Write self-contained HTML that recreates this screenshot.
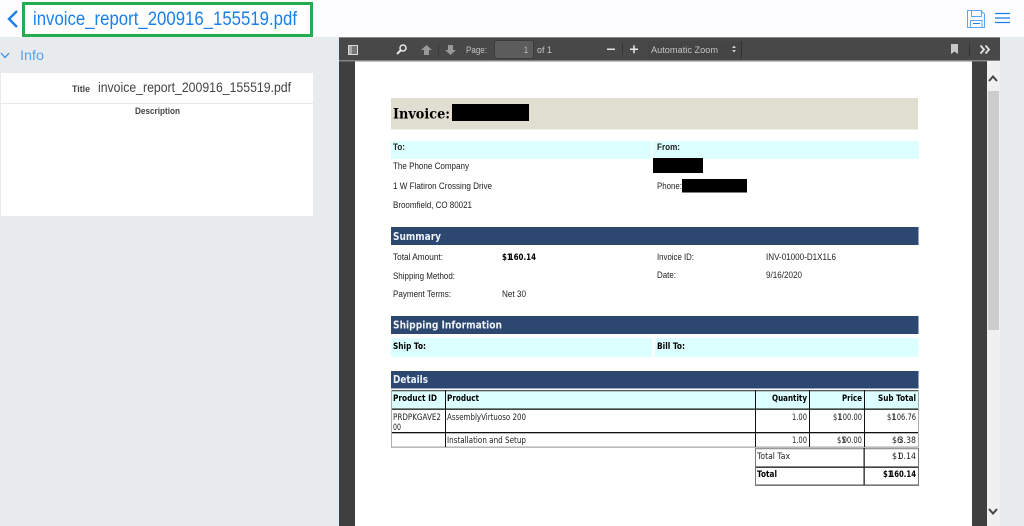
<!DOCTYPE html>
<html><head><meta charset="utf-8"><title>invoice_report_200916_155519.pdf</title>
<style>
html,body{margin:0;padding:0;background:#fff;width:1024px;height:526px;overflow:hidden}
svg{display:block}
text{font-family:"Liberation Sans",sans-serif;white-space:pre}
.s{font-size:9px;fill:#222}
.b{font-family:"DejaVu Sans",sans-serif;font-size:8.800px;font-weight:bold;fill:#000}
.h{font-family:"DejaVu Sans",sans-serif;font-size:10.800px;font-weight:bold;fill:#eef2f8}
.t{font-family:"DejaVu Sans",sans-serif;font-size:8.800px;fill:#222}
.l{font-size:9.500px;fill:#c4c4c4}
</style></head><body>
<svg width="1024" height="526" viewBox="0 0 1024 526" xmlns="http://www.w3.org/2000/svg">
<rect width="1024" height="37" fill="#fdfdff"/>
<rect y="37" width="1024" height="489" fill="#e8ebee"/>
<!-- header -->
<path d="M17 11 L9 19 L17 27" fill="none" stroke="#1a7fe8" stroke-width="2.400"/>
<rect x="23.500" y="3.500" width="288" height="32" fill="#fff" stroke="#22ae50" stroke-width="3"/>
<text x="33" y="25" font-size="19" fill="#1a7fe8" textLength="264" lengthAdjust="spacingAndGlyphs">invoice_report_200916_155519.pdf</text>
<g fill="none" stroke="#5aa6f2" stroke-width="1">
<path d="M967.500 10.500 H981 L984.500 14 V27.500 H967.500 Z"/>
<path d="M971.500 10.500 V16.500 H981.500 V10.500"/>
<path d="M970.500 27.500 V20.500 H982 V27.500"/>
<path d="M973 23.500 H980" stroke="#1a7fe8"/>
</g>
<path d="M995 13.500 H1010 M995 18 H1010 M995 22.500 H1010" stroke="#1a7fe8" stroke-width="1.300"/>
<!-- sidebar -->
<path d="M1 53 L5 57.500 L9 53" fill="none" stroke="#3a8fe8" stroke-width="1.300"/>
<text x="20" y="60" font-size="14" fill="#5aa2ee" textLength="24" lengthAdjust="spacingAndGlyphs">Info</text>
<rect x="1" y="73" width="312" height="143" fill="#fff"/>
<rect x="1" y="103" width="312" height="1" fill="#e8e8e8"/>
<text x="72" y="92" font-size="9.500" font-weight="bold" fill="#444" textLength="18" lengthAdjust="spacingAndGlyphs">Title</text>
<text x="98" y="92" font-size="14" fill="#444" textLength="193" lengthAdjust="spacingAndGlyphs">invoice_report_200916_155519.pdf</text>
<text x="135" y="114" font-size="9.500" font-weight="bold" fill="#444" textLength="45" lengthAdjust="spacingAndGlyphs">Description</text>
<!-- viewer -->
<rect x="339" y="37" width="661" height="489" fill="#3f3f3f"/>
<rect x="339" y="37" width="661" height="24" fill="#484848"/>
<rect x="339" y="37" width="661" height="1" fill="#8a8a8a"/>
<rect x="339" y="60" width="661" height="1.500" fill="#858585"/>
<rect x="355" y="61.500" width="617" height="464.500" fill="#fff"/>
<rect x="987" y="61" width="13" height="465" fill="#f0f0f0"/>
<rect x="988" y="91" width="11" height="239" fill="#cdcdcd"/>
<path d="M989 81 L993 76.500 L997 81" fill="none" stroke="#444" stroke-width="2"/>
<path d="M989 509 L993 513.500 L997 509" fill="none" stroke="#444" stroke-width="2"/>
<!-- toolbar -->
<rect x="348.500" y="45.500" width="9" height="9" fill="#777" stroke="#ddd"/>
<rect x="349" y="46" width="3" height="8" fill="#aaa"/>
<circle cx="403" cy="48" r="3" fill="none" stroke="#e8e8e8" stroke-width="1.500"/>
<path d="M401 50 L397 54" stroke="#e8e8e8" stroke-width="2"/>
<path d="M426.500 45 L432 50 H429 V55 H424 V50 H421 Z" fill="#999"/>
<rect x="438" y="44" width="1" height="11" fill="#3a3a3a"/>
<path d="M450.500 55 L456 50 H453 V45 H448 V50 H445 Z" fill="#999"/>
<text x="466" y="53" class="l" textLength="21" lengthAdjust="spacingAndGlyphs">Page:</text>
<rect x="494.500" y="40.500" width="39" height="18" rx="2" fill="#5c5c5c" stroke="#3c3c3c"/>
<text x="524" y="53" class="l" textLength="4" lengthAdjust="spacingAndGlyphs">1</text>
<text x="537" y="53" class="l" textLength="15" lengthAdjust="spacingAndGlyphs">of 1</text>
<rect x="607" y="48.500" width="8" height="1.500" fill="#e4e4e4"/>
<rect x="622" y="44" width="1" height="11" fill="#333"/>
<path d="M630 49.300 H638 M634 45.300 V53.300" stroke="#e8e8e8" stroke-width="1.500"/>
<rect x="648" y="41" width="93" height="18" rx="2" fill="#454545"/>
<text x="651" y="53" class="l" textLength="67" lengthAdjust="spacingAndGlyphs">Automatic Zoom</text>
<path d="M732 48 L734 45.500 L736 48 Z M732 50 L734 52.500 L736 50 Z" fill="#ccc"/>
<rect x="741" y="41" width="1" height="17" fill="#333"/>
<path d="M951 44 H958 V54 L954.500 51.500 L951 54 Z" fill="#c8c8c8"/>
<rect x="969" y="43" width="1" height="13" fill="#333"/>
<path d="M980.500 45.500 L984 49.500 L980.500 53.500 M985.500 45.500 L989 49.500 L985.500 53.500" fill="none" stroke="#e4e4e4" stroke-width="1.800"/>
<!-- document -->
<rect x="391" y="98" width="527" height="31.500" fill="#dfded0"/>
<text x="393" y="118.500" font-size="14" font-weight="bold" fill="#000" style="font-family:'DejaVu Serif','DejaVu Sans',serif" textLength="57" lengthAdjust="spacingAndGlyphs">Invoice:</text>
<rect x="452" y="104" width="77" height="17" fill="#000"/>
<rect x="391" y="141" width="260.500" height="18" fill="#dcffff"/>
<rect x="653" y="141" width="266" height="18" fill="#dcffff"/>
<text x="393" y="150" class="s" font-weight="bold" textLength="12" lengthAdjust="spacingAndGlyphs">To:</text>
<text x="657" y="150" class="s" font-weight="bold" textLength="23" lengthAdjust="spacingAndGlyphs">From:</text>
<rect x="653" y="158" width="50" height="15" fill="#000"/>
<text x="393" y="169" class="s" textLength="76" lengthAdjust="spacingAndGlyphs">The Phone Company</text>
<text x="393" y="189" class="s" textLength="99" lengthAdjust="spacingAndGlyphs">1 W Flatiron Crossing Drive</text>
<text x="393" y="208" class="s" textLength="79" lengthAdjust="spacingAndGlyphs">Broomfield, CO 80021</text>
<text x="657" y="189" class="s" textLength="25" lengthAdjust="spacingAndGlyphs">Phone:</text>
<rect x="682" y="179" width="65" height="13.500" fill="#000"/>
<rect x="391" y="227" width="527.500" height="18" fill="#2c4770"/>
<text x="393" y="240" class="h" textLength="48" lengthAdjust="spacingAndGlyphs">Summary</text>
<text x="393" y="260" class="s" textLength="50" lengthAdjust="spacingAndGlyphs">Total Amount:</text>
<text x="502" y="260" class="b" dx="0 0 -4 0 0 0 0 0" textLength="34" lengthAdjust="spacingAndGlyphs">$1160.14</text>
<text x="393" y="279" class="s" textLength="62" lengthAdjust="spacingAndGlyphs">Shipping Method:</text>
<text x="393" y="297" class="s" textLength="58" lengthAdjust="spacingAndGlyphs">Payment Terms:</text>
<text x="502" y="297" class="s" textLength="24" lengthAdjust="spacingAndGlyphs">Net 30</text>
<text x="657" y="260" class="s" textLength="37" lengthAdjust="spacingAndGlyphs">Invoice ID:</text>
<text x="766" y="260" class="s" textLength="70" lengthAdjust="spacingAndGlyphs">INV-01000-D1X1L6</text>
<text x="657" y="278" class="s" textLength="19" lengthAdjust="spacingAndGlyphs">Date:</text>
<text x="766" y="278" class="s" textLength="36" lengthAdjust="spacingAndGlyphs">9/16/2020</text>
<rect x="391" y="316" width="527.500" height="18" fill="#2c4770"/>
<text x="393" y="328.500" class="h" textLength="109" lengthAdjust="spacingAndGlyphs">Shipping Information</text>
<rect x="391" y="338" width="261" height="19" fill="#dcffff"/>
<rect x="655" y="338" width="263.500" height="19" fill="#dcffff"/>
<text x="393" y="349" class="b" textLength="33" lengthAdjust="spacingAndGlyphs">Ship To:</text>
<text x="657" y="349" class="b" textLength="28" lengthAdjust="spacingAndGlyphs">Bill To:</text>
<rect x="391" y="371" width="527.500" height="17.500" fill="#2c4770"/>
<text x="393" y="383" class="h" textLength="35" lengthAdjust="spacingAndGlyphs">Details</text>
<!-- table -->
<rect x="391" y="391" width="527" height="18" fill="#dcffff"/>
<rect x="391" y="390" width="527.500" height="1.300" fill="#555"/>
<rect x="391" y="408.500" width="527.500" height="1.300" fill="#111"/>
<rect x="391" y="432" width="527.500" height="1.300" fill="#111"/>
<rect x="391" y="446.500" width="527.500" height="1.300" fill="#aaa"/>
<rect x="391" y="390" width="1" height="57" fill="#aaa"/>
<rect x="445" y="390" width="1" height="57" fill="#111"/>
<rect x="755" y="390" width="1" height="57" fill="#111"/>
<rect x="809" y="390" width="1" height="57" fill="#111"/>
<rect x="864" y="390" width="1" height="57" fill="#111"/>
<rect x="918" y="390" width="1" height="57" fill="#aaa"/>
<text x="393" y="401" class="b" textLength="44" lengthAdjust="spacingAndGlyphs">Product ID</text>
<text x="447" y="401" class="b" textLength="32" lengthAdjust="spacingAndGlyphs">Product</text>
<text x="772" y="401" class="b" textLength="35" lengthAdjust="spacingAndGlyphs">Quantity</text>
<text x="842" y="401" class="b" textLength="20" lengthAdjust="spacingAndGlyphs">Price</text>
<text x="878" y="401" class="b" textLength="38" lengthAdjust="spacingAndGlyphs">Sub Total</text>
<text x="393" y="420" class="t" textLength="48" lengthAdjust="spacingAndGlyphs">PRDPKGAVE2</text>
<text x="393" y="430" class="t" textLength="8" lengthAdjust="spacingAndGlyphs">00</text>
<text x="447" y="420" class="t" textLength="79" lengthAdjust="spacingAndGlyphs">AssemblyVirtuoso 200</text>
<text x="447" y="443" class="t" textLength="79" lengthAdjust="spacingAndGlyphs">Installation and Setup</text>
<text x="792" y="420" class="t" textLength="15" lengthAdjust="spacingAndGlyphs">1.00</text>
<text x="792" y="443" class="t" textLength="15" lengthAdjust="spacingAndGlyphs">1.00</text>
<text x="833" y="420" class="t" dx="0 0 -4 0 0 0 0" textLength="29" lengthAdjust="spacingAndGlyphs">$1100.00</text>
<text x="887" y="420" class="t" dx="0 0 -4 0 0 0 0" textLength="29" lengthAdjust="spacingAndGlyphs">$1106.76</text>
<text x="837" y="443" class="t" dx="0 0 -4 0 0 0" textLength="25" lengthAdjust="spacingAndGlyphs">$500.00</text>
<text x="892" y="443" class="t" dx="0 0 -4 0 0" textLength="24" lengthAdjust="spacingAndGlyphs">$63.38</text>
<!-- totals -->
<rect x="755" y="448" width="164" height="1.300" fill="#999"/>
<rect x="755" y="466.500" width="164" height="1.300" fill="#111"/>
<rect x="755" y="484.500" width="164" height="1.300" fill="#555"/>
<rect x="755" y="448" width="1" height="37" fill="#777"/>
<rect x="863.500" y="448" width="1.300" height="37" fill="#222"/>
<rect x="918" y="448" width="1" height="37" fill="#777"/>
<text x="757" y="459" class="t" textLength="33" lengthAdjust="spacingAndGlyphs">Total Tax</text>
<text x="757" y="477" class="b" textLength="20" lengthAdjust="spacingAndGlyphs">Total</text>
<text x="892" y="459" class="t" dx="0 0 -4 0 0" textLength="24" lengthAdjust="spacingAndGlyphs">$10.14</text>
<text x="883" y="477" class="b" dx="0 0 -4 0 0 0 0 0" textLength="33" lengthAdjust="spacingAndGlyphs">$1160.14</text>
</svg>
</body></html>
